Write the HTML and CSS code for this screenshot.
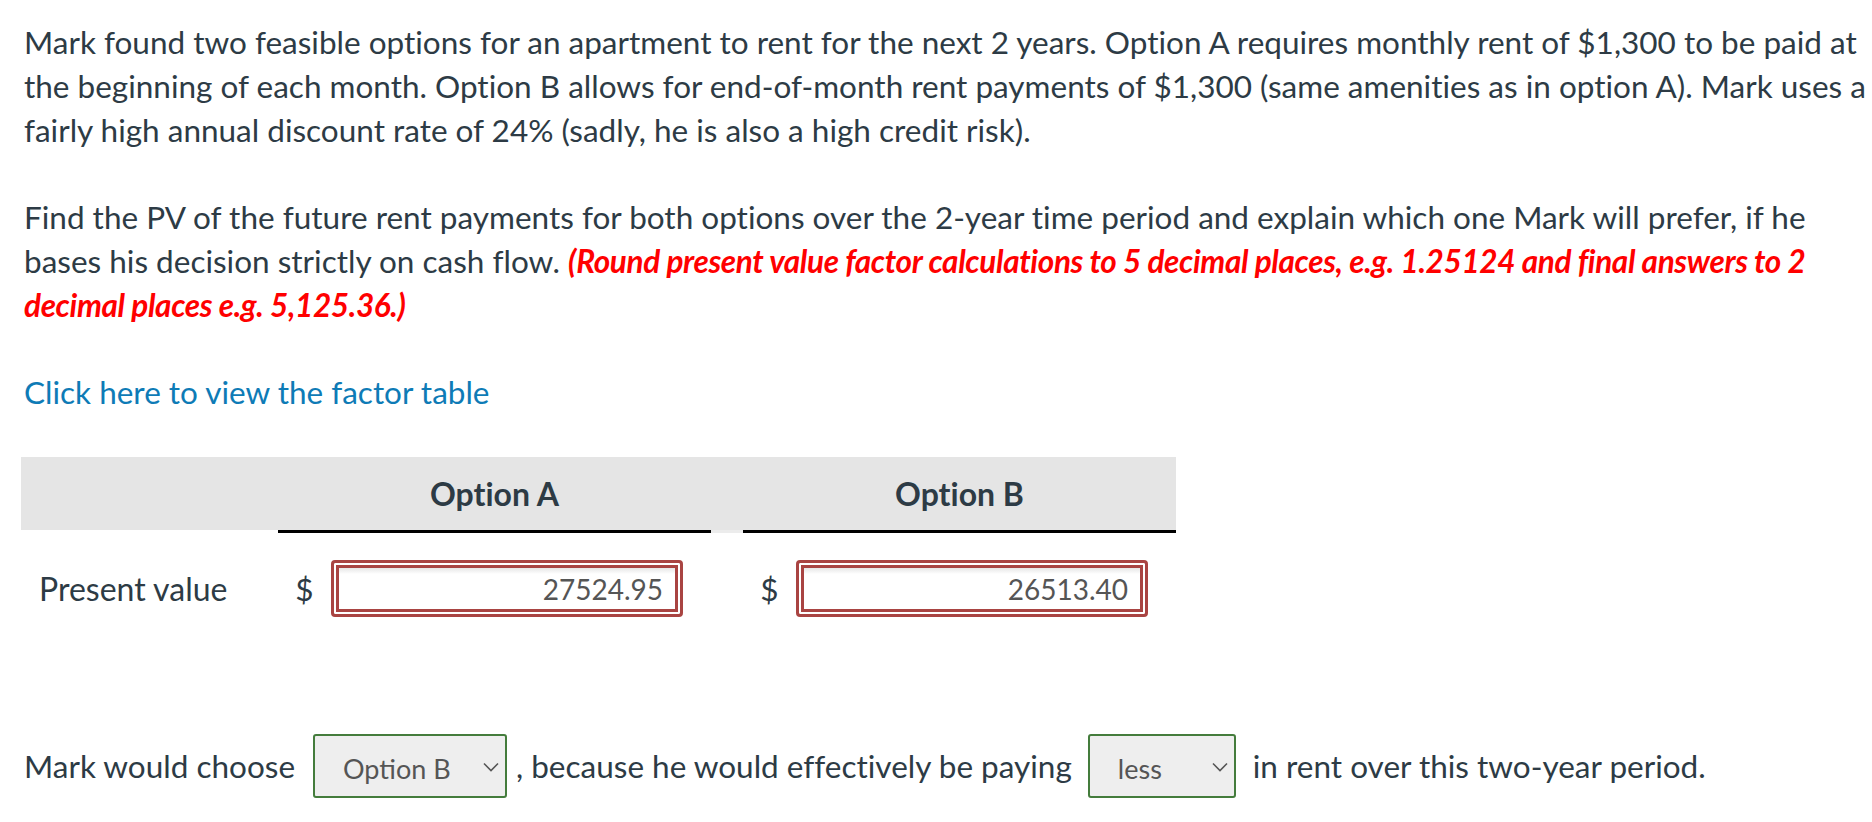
FILE: index.html
```html
<!DOCTYPE html>
<html>
<head>
  <meta charset="utf-8">
  <link rel="stylesheet" href="styles.css">
</head>
<body>
  <div class="question">
    <p class="para">Mark found two feasible options for an apartment to rent for the next 2 years. Option A requires monthly rent of $1,300 to be paid at the beginning of each month. Option B allows for end-of-month rent payments of $1,300 (same amenities as in option A). Mark uses a fairly high annual discount rate of 24% (sadly, he is also a high credit risk).</p>

    <p class="para">Find the PV of the future rent payments for both options over the 2-year time period and explain which one Mark will prefer, if he bases his decision strictly on cash flow. <strong class="note">(Round present value factor calculations to 5 decimal places, e.g. 1.25124 and final answers to 2 decimal places e.g. 5,125.36.)</strong></p>

    <p class="para"><a href="#" class="factor-link">Click here to view the factor table</a></p>

    <div class="answer-grid">
      <div class="head-cell"></div>
      <div class="head-cell head-option">Option A</div>
      <div class="head-cell head-gap"></div>
      <div class="head-cell head-option">Option B</div>

      <div class="row-label">Present value</div>
      <div class="value-cell">
        <span class="currency">$</span>
        <input class="value-input" type="text" value="27524.95" readonly>
      </div>
      <div></div>
      <div class="value-cell">
        <span class="currency">$</span>
        <input class="value-input" type="text" value="26513.40" readonly>
      </div>
    </div>

    <p class="choice-line">
      <span>Mark would choose</span>
      <span class="dropdown dropdown-option">
        <select class="dropdown-select">
          <option selected>Option B</option>
          <option>Option A</option>
        </select>
        <svg class="chevron" width="16" height="10" viewBox="0 0 16 10"><path d="M1 1.5 L8 8.5 L15 1.5" fill="none" stroke="#555" stroke-width="1.6"/></svg>
      </span>
      <span>, because he would effectively be paying</span>
      <span class="dropdown dropdown-amount">
        <select class="dropdown-select">
          <option selected>less</option>
          <option>more</option>
        </select>
        <svg class="chevron" width="16" height="10" viewBox="0 0 16 10"><path d="M1 1.5 L8 8.5 L15 1.5" fill="none" stroke="#555" stroke-width="1.6"/></svg>
      </span>
      <span>in rent over this two-year period.</span>
    </p>
  </div>
</body>
</html>
```

FILE: styles.css
```css
body {
  margin: 0;
  padding: 0;
  background: #fff;
  font-family: Lato, "Open Sans", sans-serif;
  color: #2d3b45;
}

.question {
  padding: 20px 6px 0 24px;
  font-size: 31.5px;
  line-height: 44px;
  font-variant-ligatures: no-common-ligatures;
}

.para {
  margin: 0 0 43px 0;
}

.note {
  color: #ff0000;
  font-style: italic;
  font-weight: 700;
  letter-spacing: -0.35px;
  font-variant-ligatures: common-ligatures;
}

.factor-link {
  color: #0e7bb6;
  text-decoration: none;
}

/* answer table */
.answer-grid {
  display: grid;
  grid-template-columns: 257px 433px 32px 433px;
  margin: 0 0 0 -3px;
}

.head-cell {
  height: 73px;
  background: #e5e5e5;
}

.head-option {
  display: flex;
  align-items: center;
  justify-content: center;
  font-size: 32px;
  font-weight: 700;
  border-bottom: 3px solid #000;
}

.head-gap {
  border-bottom: 3px solid #ececec;
}

.row-label {
  display: flex;
  align-items: center;
  padding-left: 18px;
  height: 57px;
  margin-top: 27px;
  font-size: 32px;
}

.value-cell {
  display: flex;
  align-items: center;
  margin-top: 27px;
  height: 57px;
}

.currency {
  width: 53px;
  text-align: center;
}

.value-input {
  box-sizing: border-box;
  width: 352px;
  height: 57px;
  border: 3px solid #a94442;
  border-radius: 4px;
  padding: 0 17px;
  text-align: right;
  font-family: Lato, "Open Sans", sans-serif;
  font-size: 28px;
  color: #555;
  background: linear-gradient(#e6e6e6 5px, #fff 11px);
  box-shadow: inset 0 0 0 2px #fff, inset 0 0 0 5px #a94442;
}

/* sentence with dropdowns */
.choice-line {
  display: flex;
  align-items: center;
  margin: 117px 0 0 0;
  white-space: nowrap;
}

.dropdown {
  position: relative;
  display: inline-flex;
  margin: 0 9px 0 18px;
}

.dropdown-option {
  width: 194px;
}

.dropdown-amount {
  width: 148px;
  margin-left: 16px;
  margin-right: 17px;
}

.dropdown-select {
  -webkit-appearance: none;
  appearance: none;
  box-sizing: border-box;
  width: 100%;
  height: 64px;
  padding: 4px 0 0 28px;
  border: 2px solid #447c3c;
  border-radius: 3px;
  background: #eeeeee;
  font-family: Lato, "Open Sans", sans-serif;
  font-size: 27px;
  color: #555;
}

.chevron {
  position: absolute;
  right: 8px;
  top: 28px;
}
```
